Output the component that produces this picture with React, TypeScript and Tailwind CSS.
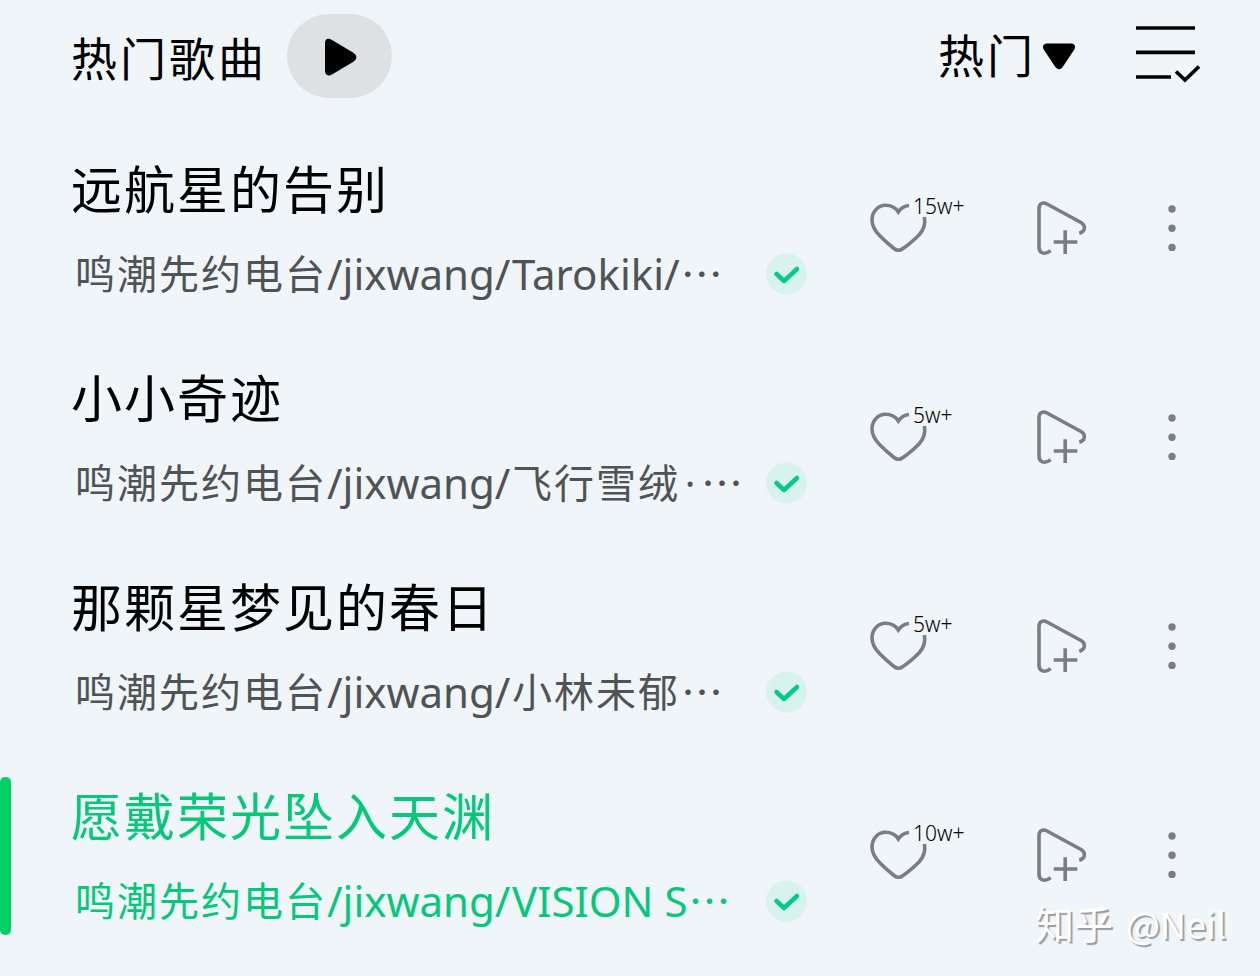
import clsx from "clsx";

type Song = {
  title: string;
  artist: string;
  featured: string;
  separator?: string;
  likes: string;
  playing?: boolean;
};

const songs: Song[] = [
  { title: "远航星的告别", artist: "鸣潮先约电台", featured: "Tarokiki/", likes: "15w+" },
  { title: "小小奇迹", artist: "鸣潮先约电台", featured: "飞行雪绒", separator: "·", likes: "5w+" },
  { title: "那颗星梦见的春日", artist: "鸣潮先约电台", featured: "小林未郁", likes: "5w+" },
  { title: "愿戴荣光坠入天渊", artist: "鸣潮先约电台", featured: "VISION S", likes: "10w+", playing: true },
];

const HeartIcon = () => (
  <svg width="64" height="60" viewBox="0 0 64 60" fill="none" stroke="#7b7e80" strokeWidth="3.6">
    <path d="M43 7.5C38.5 8 34.8 10.2 32.3 14C29.5 9.5 24.5 7.3 19.5 7.3C11.8 7.3 6 14 6 22C6 29 9.4 33.4 14 38C18.5 42.5 23 46.5 28 50.5Q32.5 54 37 50.5C43 46.500 48 42 53 37C58 31.500 59.700 26 58.400 19" />
  </svg>
);

const PlayNextIcon = () => (
  <svg width="60" height="60" viewBox="0 0 60 60" fill="none" stroke="#7b7e80" strokeWidth="3.6">
    <path d="M18.700 52.700C12.500 57.500 7 55 7 49V10.500C7 5.500 11 3.700 15 6L49 24.500C54 27.500 53.500 33.500 47.300 35.300" />
    <path d="M21.700 44H45.300M33.200 32.300V56" />
  </svg>
);

const MoreIcon = () => (
  <svg width="12" height="60" viewBox="0 0 12 60" fill="#7b7e80">
    <circle cx="6" cy="11" r="3.700" />
    <circle cx="6" cy="30.300" r="3.700" />
    <circle cx="6" cy="49.400" r="3.700" />
  </svg>
);

const CheckBadge = () => (
  <svg width="42" height="42" viewBox="0 0 42 42" fill="none">
    <circle cx="20.500" cy="21" r="20.500" fill="#d8f3ed" />
    <path d="M10.500 21L18 28L31 16" stroke="#05cb87" strokeWidth="4.500" strokeLinecap="round" strokeLinejoin="round" />
  </svg>
);

const Header = () => (
  <div className="flex h-[124px] pl-[71px] pr-[60px]">
    <div className="w-[216px] pt-[25px] text-[46px] leading-[67px] tracking-[3px]">热门歌曲</div>
    <button className="mt-[14px] flex h-[84px] w-[105px] items-center justify-center rounded-[42px] bg-[#dde1e4]">
      <svg width="34" height="40" viewBox="0 0 34 40" className="mt-px">
        <path d="M2 6C2 2 5 0.500 9 3L30 15.500C34.500 18.500 34.500 22 30 25L9 37.500C5 39.500 2 38 2 34Z" fill="#000" />
      </svg>
    </button>
    <div className="ml-auto flex">
      <div className="w-[105px] pt-[22px] text-[46px] leading-[67px] tracking-[3px]">热门</div>
      <svg width="32" height="28" viewBox="0 0 32 28" className="mt-[43px]">
        <path d="M4 0.500H28C32 0.500 33 4 31 7L20 23.500C17.500 27 14.500 27 12 23.500L1 7C-1 4 0 0.500 4 0.500Z" fill="#000" />
      </svg>
      <svg width="66" height="60" viewBox="0 0 66 60" fill="none" stroke="#000" strokeWidth="3.700" className="-mr-px ml-[60px] mt-[24px]">
        <path d="M1 4H60M1 28.300H60M1 53H36M41 47.500L50 56L64 42.500" />
      </svg>
    </div>
  </div>
);

const SongRow = ({ song }: { song: Song }) => {
  return (
    <div className={clsx("flex h-[209px] items-center", song.playing && "text-[#05c878]")}>
      <div className={clsx("h-[158px] w-[11px] rounded-[5px]", song.playing && "bg-[#03d166]")}></div>
      <div className="flex h-full w-[755px] flex-col pl-[60px]">
        <div className="mt-[27px] h-[76px] whitespace-nowrap text-[51px] leading-[76px] tracking-[2px]">
          {song.title}
        </div>
        <div
          className={clsx(
            "mt-[17px] flex h-[60px] whitespace-nowrap pl-[4px] text-[40px] leading-[60px]",
            !song.playing && "text-[#505355]"
          )}
        >
          <span className="w-[252px] tracking-[2px]">{song.artist}</span>
          <span className="w-[185px] text-[42px]">/jixwang/</span>
          <span className={/^[A-Z]/.test(song.featured) ? "text-[42px]" : "tracking-[2px]"}>
            {song.featured}
          </span>
          {song.separator && <span className="w-[20px] text-center">{song.separator}</span>}
          <span className="ml-[1px] font-['Noto_Sans_CJK_SC',sans-serif] text-[42px] leading-[56px]">…</span>
        </div>
      </div>
      <div className="mt-[91px]">
        <CheckBadge />
      </div>
      <div className="relative -mt-[2px] ml-[58px]">
        <HeartIcon />
        <span className="absolute left-[47px] top-[-5px] text-[21px] font-[350] leading-[26px] text-black">{song.likes}</span>
      </div>
      <div className="-mt-[2px] ml-[102px]">
        <PlayNextIcon />
      </div>
      <div className="-mt-[2px] ml-[74px]">
        <MoreIcon />
      </div>
    </div>
  );
};

export default function App() {
  return (
    <div className="relative h-[976px] w-[1260px] overflow-hidden bg-[#eff5f8] font-['Noto_Sans','Noto_Sans_CJK_SC',sans-serif] text-black" lang="zh-CN">
      <Header />
      {songs.map((song) => (
        <SongRow key={song.title} song={song} />
      ))}
      <div className="absolute left-[1035px] top-[895px] flex items-baseline gap-[13px] whitespace-nowrap font-['Noto_Sans_CJK_SC',sans-serif] text-[39px] leading-[54px] text-white [text-shadow:2px_2px_1px_#999c9e]">
        <span>知乎</span>
        <span className="text-[36px]">@Neil</span>
      </div>
    </div>
  );
}
